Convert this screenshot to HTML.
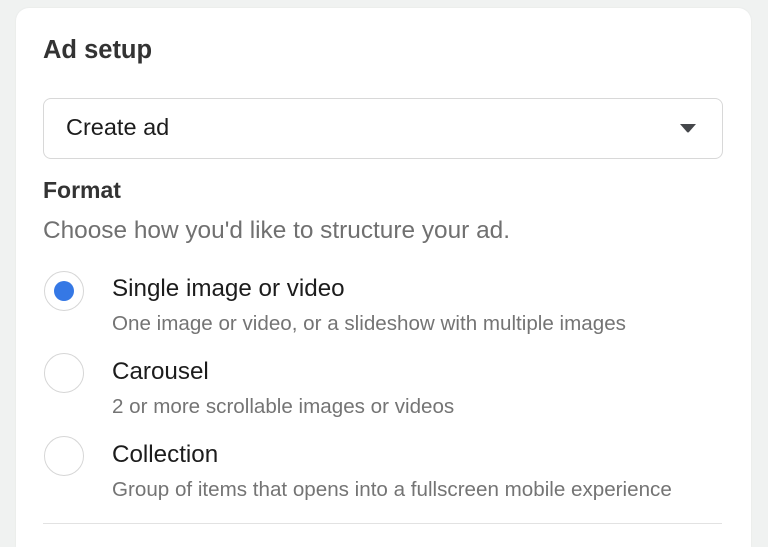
<!DOCTYPE html>
<html><head><meta charset="utf-8"><style>
html,body{margin:0;padding:0;}
body{width:768px;height:547px;background:#f0f2f1;overflow:hidden;font-family:"Liberation Sans",Arial,sans-serif;position:relative;}
.card{position:absolute;left:16px;top:8px;width:735px;height:539px;background:#fff;border-radius:13px 13px 0 0;box-shadow:0 0 2px rgba(0,0,0,0.06);}
.t{position:absolute;white-space:nowrap;}
.h{font-weight:bold;color:#333;}
.dd{position:absolute;left:43px;top:98px;width:678px;height:59px;border:1px solid #d8d8d8;border-radius:8px;background:#fff;}
.r{position:absolute;width:38px;height:38px;border:1px solid #d6d6d6;border-radius:50%;background:#fff;}
.dot{position:absolute;left:9px;top:9px;width:20px;height:20px;border-radius:50%;background:#3578e5;}
.ti{font-size:24.2px;color:#1c1c1c;}
.su{font-size:20.6px;color:#747474;}
</style></head><body>
<div class="card"></div>
<div class="t h" style="left:43px;top:36px;font-size:25.5px;">Ad setup</div>
<div class="dd"></div>
<div class="t" style="left:66px;top:114px;font-size:23.5px;color:#1c1c1c;">Create ad</div>
<svg style="position:absolute;left:679px;top:123px" width="18" height="11"><path d="M1 1 L17 1 L10 9 Q9 10 8 9 Z" fill="#45474b"/></svg>
<div class="t h" style="left:43px;top:177px;font-size:23px;">Format</div>
<div class="t" style="left:43px;top:217px;font-size:24.4px;color:#707070;">Choose how you'd like to structure your ad.</div>

<div class="r" style="left:44px;top:271px;"><div class="dot"></div></div>
<div class="t ti" style="left:112px;top:275px;">Single image or video</div>
<div class="t su" style="left:112px;top:312px;">One image or video, or a slideshow with multiple images</div>

<div class="r" style="left:44px;top:353px;"></div>
<div class="t ti" style="left:112px;top:358px;">Carousel</div>
<div class="t su" style="left:112px;top:395px;">2 or more scrollable images or videos</div>

<div class="r" style="left:44px;top:436px;"></div>
<div class="t ti" style="left:112px;top:441px;">Collection</div>
<div class="t su" style="left:112px;top:478px;">Group of items that opens into a fullscreen mobile experience</div>

<div style="position:absolute;left:43px;top:523px;width:679px;height:1px;background:#e2e2e2;"></div>
</body></html>
